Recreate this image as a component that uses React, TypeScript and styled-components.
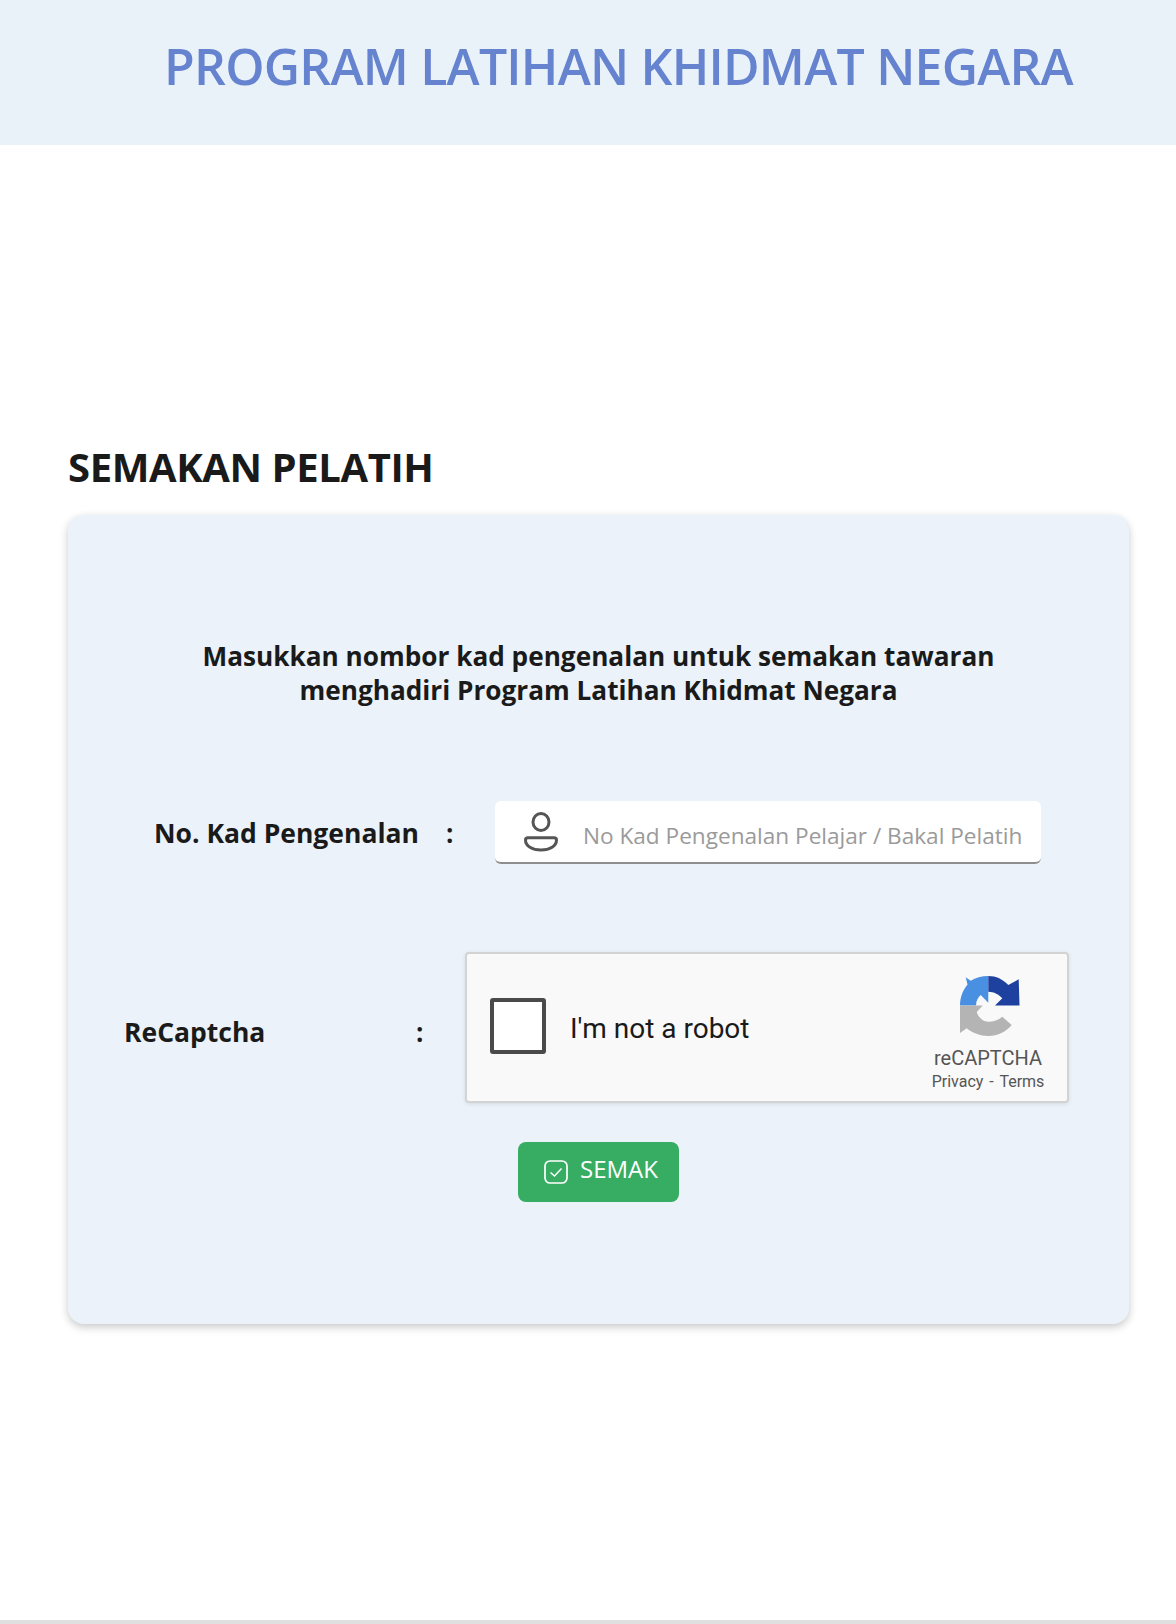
import styled, { createGlobalStyle } from "styled-components";

const GlobalStyle = createGlobalStyle`
  html, body {
    margin: 0;
    padding: 0;
    background: #ffffff;
  }
  * {
    box-sizing: border-box;
  }
`;

export default function App() {
  return (
    <Page>
      <GlobalStyle />
      <Banner>
        <BannerTitle>PROGRAM LATIHAN KHIDMAT NEGARA</BannerTitle>
      </Banner>
      <Main>
        <Heading>SEMAKAN PELATIH</Heading>
        <Card>
          <Intro>
            Masukkan nombor kad pengenalan untuk semakan tawaran
            <br />
            menghadiri Program Latihan Khidmat Negara
          </Intro>
          <Row $indent={86} $top={94}>
            <Label>No. Kad Pengenalan</Label>
            <Colon>:</Colon>
            <InputBox>
              <PersonIcon />
              <Placeholder>No Kad Pengenalan Pelajar / Bakal Pelatih</Placeholder>
            </InputBox>
          </Row>
          <Row $indent={56} $top={88}>
            <Label $drop={8}>ReCaptcha</Label>
            <Colon $drop={8}>:</Colon>
            <Captcha>
              <CheckBox />
              <RobotText>I'm not a robot</RobotText>
              <CaptchaBrand>
                <CaptchaLogo />
                <BrandName>reCAPTCHA</BrandName>
                <BrandLinks>Privacy - Terms</BrandLinks>
              </CaptchaBrand>
            </Captcha>
          </Row>
          <SubmitButton type="button">
            <CheckIcon />
            <ButtonText>SEMAK</ButtonText>
          </SubmitButton>
        </Card>
      </Main>
      <BottomBar />
    </Page>
  );
}

function PersonIcon() {
  return (
    <svg width="34" height="40" viewBox="0 0 34 40" fill="none" stroke="#555555" strokeWidth="3">
      <ellipse cx="17" cy="10" rx="8" ry="8.5" />
      <path d="M4 25.8H30C31.5 25.8 32.5 26.6 32.5 28C32.5 34 26 38 17 38C8 38 1.5 34 1.5 28C1.5 26.6 2.5 25.8 4 25.8Z" />
    </svg>
  );
}

function CaptchaLogo() {
  return (
    <LogoSvg width="60" height="60" viewBox="0 0 60 60">
      <path d="M0 29.5C0 21 3 14 7.5 8.5L5.7 1.3L10.7 4.7C15.5 1.8 21.5 0 28.3 0V26.7L20.7 19C18 21.5 16 25 16 29.5Z" fill="#4a90e2" />
      <path d="M28.3 0C36 0 43 3.3 48.3 9L58.7 3.3L59.5 29.5H35L42.3 22.3C39 18.5 34 15.7 28.3 15.7Z" fill="#1e409f" />
      <path d="M0 29.5H22.7L16.7 36C18.5 41.5 23 45.7 28.3 45.7C33.5 45.7 38.5 44 42.3 40.7L51.7 49C46 55.8 38 60 28.3 60C20 60 12.5 57 6.7 52.3L0 57Z" fill="#b4b4b4" />
    </LogoSvg>
  );
}

function CheckIcon() {
  return (
    <svg width="24" height="24" viewBox="0 0 24 24" fill="none" stroke="#ffffff" strokeWidth="1.7">
      <rect x="1" y="1" width="22" height="22" rx="5" />
      <path d="M6.5 12.5L10.5 16L17.5 8.5" strokeWidth="1.5" />
    </svg>
  );
}

const Page = styled.div`
  min-height: 1624px;
  display: flex;
  flex-direction: column;
  font-family: "Open Sans", "Noto Sans", sans-serif;
  color: #1a1a1a;
`;

const Banner = styled.header`
  height: 145px;
  background-color: #eaf2f9;
  padding: 32px 0 0 164px;
`;

const BannerTitle = styled.h1`
  margin: 0;
  font-size: 50px;
  line-height: 68px;
  font-weight: 600;
  color: #6583cf;
  letter-spacing: -0.77px;
  white-space: nowrap;
`;

const Main = styled.main`
  padding: 0 47px 0 68px;
`;

const Heading = styled.h2`
  margin: 296px 0 0;
  font-size: 40px;
  line-height: 52px;
  font-weight: 700;
  letter-spacing: -0.4px;
`;

const Card = styled.section`
  margin-top: 22px;
  height: 809px;
  background-color: #ebf2f9;
  border-radius: 16px;
  box-shadow: 0 3px 8px rgba(0, 0, 0, 0.22);
  padding-top: 124px;
  display: flex;
  flex-direction: column;
`;

const Intro = styled.p`
  margin: 0;
  text-align: center;
  font-size: 26.2px;
  line-height: 34px;
  font-weight: 700;
`;

const Row = styled.div<{ $indent: number; $top: number }>`
  display: flex;
  align-items: center;
  padding-left: ${(p) => p.$indent}px;
  margin-top: ${(p) => p.$top}px;
`;

const Label = styled.div<{ $drop?: number }>`
  width: 292px;
  padding-top: ${(p) => p.$drop ?? 0}px;
  font-size: 26.5px;
  font-weight: 700;
  white-space: nowrap;
`;

const Colon = styled.div<{ $drop?: number }>`
  width: 49px;
  padding-top: ${(p) => p.$drop ?? 0}px;
  font-size: 26px;
  font-weight: 700;
`;

const InputBox = styled.div`
  width: 546px;
  height: 63px;
  background-color: #ffffff;
  border-bottom: 2px solid #8e8e8e;
  border-radius: 6px;
  display: flex;
  align-items: center;
  gap: 25px;
  padding: 0 0 0 29px;
`;

const Placeholder = styled.span`
  padding-top: 8px;
  font-size: 22.6px;
  color: #9a9a9a;
  white-space: nowrap;
`;

const Captcha = styled.div`
  width: 604px;
  height: 151px;
  background-color: #f9f9f9;
  border: 2px solid #d3d3d3;
  border-radius: 4px;
  box-shadow: 0 1px 4px rgba(0, 0, 0, 0.1);
  display: flex;
  align-items: center;
  padding-left: 23px;
  font-family: Roboto, "Liberation Sans", sans-serif;
`;

const CheckBox = styled.div`
  width: 56px;
  height: 56px;
  margin-bottom: 4px;
  background-color: #ffffff;
  border: 4px solid #4a4a4a;
  border-radius: 3px;
`;

const RobotText = styled.span`
  margin: 0 0 -2px 24px;
  font-size: 28px;
  color: #1a1a1a;
`;

const CaptchaBrand = styled.div`
  margin-left: auto;
  width: 120px;
  margin-right: 19px;
  padding-top: 22px;
  align-self: flex-start;
  display: flex;
  flex-direction: column;
  align-items: center;
  color: #555555;
`;

const LogoSvg = styled.svg`
  margin-left: 3px;
`;

const BrandName = styled.div`
  margin-top: 10px;
  font-size: 20px;
  line-height: 24px;
`;

const BrandLinks = styled.div`
  margin-top: 2px;
  font-size: 16px;
  line-height: 20px;
  word-spacing: 2px;
  white-space: nowrap;
`;

const SubmitButton = styled.button`
  align-self: flex-start;
  margin: 39px 0 0 450px;
  width: 161px;
  height: 60px;
  background-color: #37ad63;
  border: none;
  border-radius: 8px;
  color: #ffffff;
  font-family: inherit;
  font-size: 24px;
  display: flex;
  align-items: center;
  gap: 12px;
  padding: 0 0 0 26px;
`;

const ButtonText = styled.span`
  margin-bottom: 7px;
`;

const BottomBar = styled.footer`
  margin-top: auto;
  height: 4px;
  background-color: #e0e0e0;
`;
